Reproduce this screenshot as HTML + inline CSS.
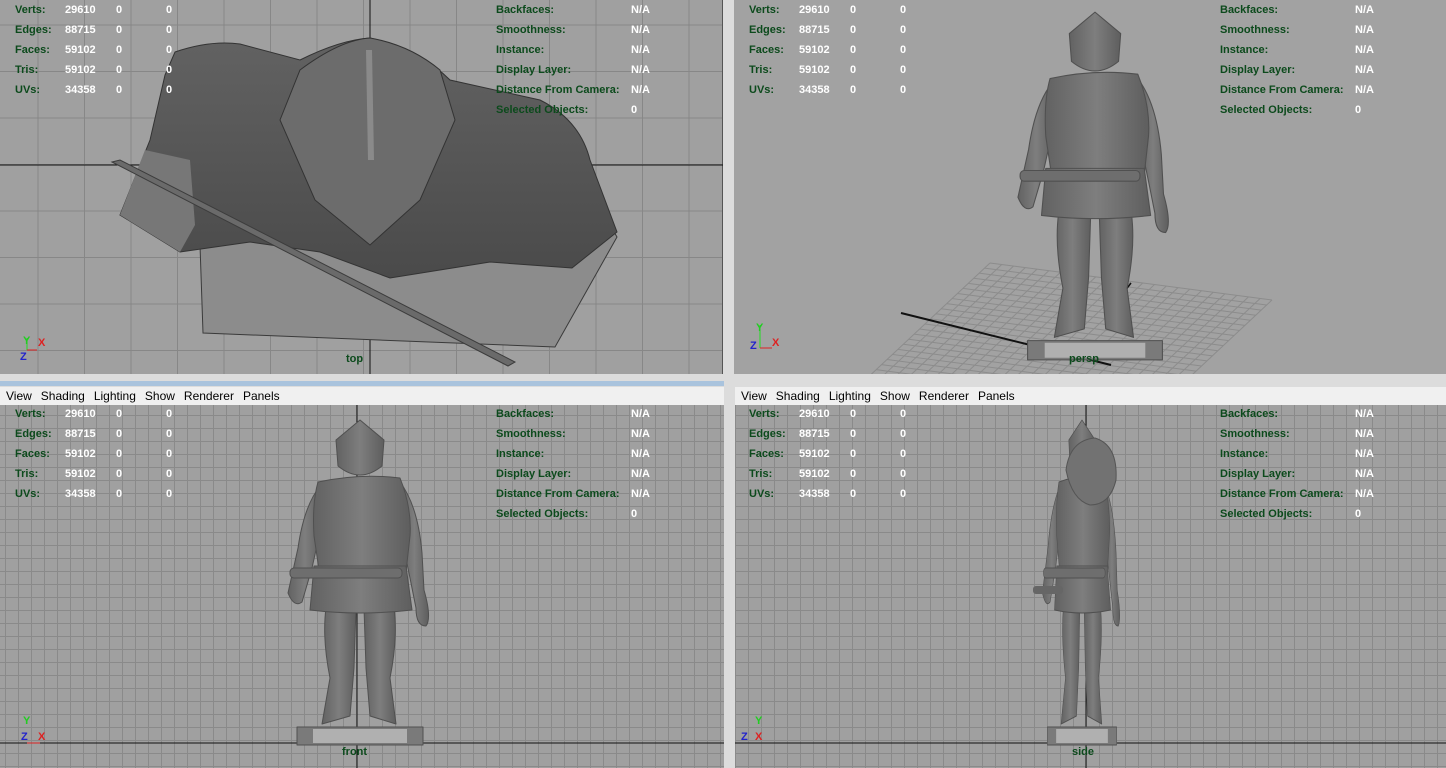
<!DOCTYPE html>
<html><head><meta charset="utf-8">
<style>
*{margin:0;padding:0;box-sizing:border-box}
body{width:1446px;height:768px;overflow:hidden;background:#dcdcdc;position:relative;font-family:"Liberation Sans",Arial,sans-serif}
.vp{position:absolute;background:#a0a0a0;overflow:hidden}
.g46{background-color:#a0a0a0;background-image:linear-gradient(90deg,#878787 1px,transparent 1px),linear-gradient(#878787 1px,transparent 1px);background-size:46.5px 46.5px;background-position:-9px -22px}
.g13{background-color:#a0a0a0;background-image:linear-gradient(90deg,#8a8a8a 1px,transparent 1px),linear-gradient(#8a8a8a 1px,transparent 1px);background-size:13px 13px}
.hud{position:absolute;font-size:11px;font-weight:bold;line-height:20px;white-space:nowrap}
.l{color:#0c4a1c;position:absolute}
.v{color:#fff;position:absolute}
.cam{position:absolute;color:#0c4a1c;font-size:11px;font-weight:bold}
.menu{position:absolute;top:387px;height:18px;background:#f0f0f0;font-size:12px;color:#000;line-height:19px;padding-left:6px;word-spacing:0}
.menu span{margin-right:9px}
svg{position:absolute;left:0;top:0}
</style></head><body>

<div class="vp g46" style="left:0;top:0;width:723px;height:374px;border-right:1px solid #555"></div>
<div class="vp" style="left:734px;top:0;width:712px;height:374px;background:#a2a2a2"></div>
<div style="position:absolute;left:0;top:381px;width:724px;height:5px;background:#a9c3dd"></div>
<div class="menu" style="left:0;width:724px"><span>View</span><span>Shading</span><span>Lighting</span><span>Show</span><span>Renderer</span><span>Panels</span></div>
<div class="menu" style="left:735px;width:711px"><span>View</span><span>Shading</span><span>Lighting</span><span>Show</span><span>Renderer</span><span>Panels</span></div>
<div class="vp g13" style="left:0;top:405px;width:724px;height:363px;background-position:5px 10px"></div>
<div class="vp g13" style="left:735px;top:405px;width:711px;height:363px;background-position:0px 10px"></div>

<svg width="1446" height="768" viewBox="0 0 1446 768">
<defs>
<linearGradient id="bd" x1="0" x2="1"><stop offset="0" stop-color="#626262"/><stop offset=".5" stop-color="#7e7e7e"/><stop offset="1" stop-color="#5e5e5e"/></linearGradient>
<linearGradient id="dk" x1="0" y1="0" x2="0" y2="1"><stop offset="0" stop-color="#626262"/><stop offset="1" stop-color="#4a4a4a"/></linearGradient>
<clipPath id="ctl"><rect x="0" y="0" width="723" height="374"/></clipPath>
<clipPath id="ctr"><rect x="734" y="0" width="712" height="374"/></clipPath>
<g id="knight" fill="url(#bd)" stroke="#505050" stroke-width="1" stroke-linejoin="round">
<path d="M-40 68 Q-56 88 -62 130 L-72 175 Q-66 190 -58 184 L-48 150 L-38 105Z"/>
<path d="M40 64 Q58 88 62 135 L64 172 Q72 200 66 208 Q56 208 56 190 L50 160 L40 112Z"/>
<path d="M-34 190 L-4 190 L-6 250 L-10 298 L-38 306 L-30 260 Q-38 220 -34 190Z"/>
<path d="M34 190 L4 190 L6 250 L10 298 L36 306 L30 260 Q38 220 34 190Z"/>
<path d="M-42 64 Q0 55 40 60 Q52 90 50 118 L44 172 L-38 172 L-46 118 Q-48 85 -42 64Z"/>
<path d="M-46 148 L46 148 L52 192 Q0 198 -50 192Z"/>
<rect x="-70" y="150" width="112" height="10" rx="4" fill="#6e6e6e"/>
<path d="M-24 22 L0 2 L24 22 L22 48 Q0 66 -22 48Z"/>
<rect x="-63" y="309" width="126" height="18" fill="#7a7a7a"/>
<rect x="-47" y="311" width="94" height="14" fill="#b0b0b0" stroke="none"/>
</g>
</defs>

<g clip-path="url(#ctl)">
<line x1="370" y1="0" x2="370" y2="374" stroke="#111"/>
<line x1="0" y1="165" x2="723" y2="165" stroke="#111"/>
<path d="M200 245 L203 333 L555 347 L617 237 L590 190 L300 210Z" fill="#8c8c8c" stroke="#3a3a3a"/>
<path d="M175 52 Q210 40 240 44 L300 60 Q340 40 370 38 Q420 50 450 80 L540 100 Q580 120 590 160 L617 232 L572 268 L490 262 L390 278 L320 252 L250 242 L180 252 L120 215 L150 140 L165 75Z" fill="url(#dk)" stroke="#333"/>
<path d="M120 215 L145 150 L190 160 L195 225 L180 252Z" fill="#777"/>
<path d="M280 120 L300 70 Q340 40 370 38 Q410 45 440 70 L455 120 L420 200 L370 245 L315 200Z" fill="#6c6c6c" stroke="#333"/>
<path d="M366 50 L372 50 L374 160 L368 160Z" fill="#8a8a8a"/>
<path d="M112 162 L120 160 L515 362 L508 366Z" fill="#6a6a6a" stroke="#3c3c3c"/>
</g>

<g clip-path="url(#ctr)">
<g stroke="#8c8c8c" stroke-width="1" fill="none" transform="matrix(11.75,1.54,-5.42,5.08,990,263)">
<path vector-effect="non-scaling-stroke" d="M0 0H24M0 1H24M0 2H24M0 3H24M0 4H24M0 5H24M0 6H24M0 7H24M0 8H24M0 9H24M0 10H24M0 11H24M0 12H24M0 13H24M0 14H24M0 15H24M0 16H24M0 17H24M0 18H24M0 19H24M0 20H24M0 21H24M0 22H24M0 23H24M0 24H24M0 0V24M1 0V24M2 0V24M3 0V24M4 0V24M5 0V24M6 0V24M7 0V24M8 0V24M9 0V24M10 0V24M11 0V24M12 0V24M13 0V24M14 0V24M15 0V24M16 0V24M17 0V24M18 0V24M19 0V24M20 0V24M21 0V24M22 0V24M23 0V24M24 0V24"/>
</g>
<line x1="901" y1="313" x2="1111" y2="365" stroke="#111" stroke-width="2"/>
<line x1="1131" y1="283" x2="1118" y2="300" stroke="#111" stroke-width="1.5"/>
<use href="#knight" transform="translate(1095,10) scale(1.07)"/>
</g>

<line x1="357" y1="405" x2="357" y2="768" stroke="#111"/>
<line x1="0" y1="743" x2="724" y2="743" stroke="#111"/>
<use href="#knight" transform="translate(360,418)"/>

<line x1="1086" y1="405" x2="1086" y2="768" stroke="#111"/>
<line x1="735" y1="743" x2="1446" y2="743" stroke="#111"/>
<use href="#knight" transform="translate(1082,418) scale(0.55,1)"/>
<path d="M1066 470 Q1070 440 1095 438 Q1118 445 1116 480 Q1110 505 1090 505 Q1072 500 1066 470Z" fill="#727272" stroke="#555"/>
<rect x="1033" y="586" width="30" height="8" rx="3" fill="#666"/>

<g font-family="Liberation Sans" font-weight="bold" font-size="11">
<g transform="translate(22,336)"><line x1="5" y1="2" x2="5" y2="14" stroke="#2d2"/><line x1="5" y1="14" x2="15" y2="14" stroke="#d22"/><text x="1" y="8" fill="#2c2">Y</text><text x="-2" y="24" fill="#22c">Z</text><text x="16" y="10" fill="#d22">X</text></g>
<g transform="translate(752,321)"><line x1="8" y1="4" x2="8" y2="27" stroke="#2d2"/><line x1="8" y1="27" x2="20" y2="27" stroke="#d22"/><text x="4" y="10" fill="#2c2">Y</text><text x="-2" y="28" fill="#22c">Z</text><text x="20" y="25" fill="#d22">X</text></g>
<g transform="translate(22,713)"><text x="1" y="11" fill="#2c2">Y</text><text x="-1" y="27" fill="#22c">Z</text><text x="16" y="27" fill="#d22">X</text><line x1="5" y1="30" x2="18" y2="30" stroke="#d22"/></g>
<g transform="translate(741,713)"><text x="14" y="11" fill="#2c2">Y</text><text x="0" y="27" fill="#22c">Z</text><text x="14" y="27" fill="#d22">X</text></g>
</g>
</svg>

<div class="cam" style="left:346px;top:353px">top</div>
<div class="cam" style="left:1069px;top:353px">persp</div>
<div class="cam" style="left:342px;top:746px">front</div>
<div class="cam" style="left:1072px;top:746px">side</div>

<div class="hud" style="left:15px;top:0px">
<div class="l" style="top:0">Verts:</div><div class="l" style="top:20px">Edges:</div><div class="l" style="top:40px">Faces:</div><div class="l" style="top:60px">Tris:</div><div class="l" style="top:80px">UVs:</div>
<div class="v" style="left:50px;top:0">29610</div><div class="v" style="left:50px;top:20px">88715</div><div class="v" style="left:50px;top:40px">59102</div><div class="v" style="left:50px;top:60px">59102</div><div class="v" style="left:50px;top:80px">34358</div>
<div class="v" style="left:101px;top:0">0<br>0<br>0<br>0<br>0</div><div class="v" style="left:151px;top:0">0<br>0<br>0<br>0<br>0</div>
<div class="l" style="left:481px;top:0">Backfaces:<br>Smoothness:<br>Instance:<br>Display Layer:<br>Distance From Camera:<br>Selected Objects:</div>
<div class="v" style="left:616px;top:0">N/A<br>N/A<br>N/A<br>N/A<br>N/A<br>0</div>
</div>
<div class="hud" style="left:749px;top:0px">
<div class="l" style="top:0">Verts:</div><div class="l" style="top:20px">Edges:</div><div class="l" style="top:40px">Faces:</div><div class="l" style="top:60px">Tris:</div><div class="l" style="top:80px">UVs:</div>
<div class="v" style="left:50px;top:0">29610</div><div class="v" style="left:50px;top:20px">88715</div><div class="v" style="left:50px;top:40px">59102</div><div class="v" style="left:50px;top:60px">59102</div><div class="v" style="left:50px;top:80px">34358</div>
<div class="v" style="left:101px;top:0">0<br>0<br>0<br>0<br>0</div><div class="v" style="left:151px;top:0">0<br>0<br>0<br>0<br>0</div>
<div class="l" style="left:471px;top:0">Backfaces:<br>Smoothness:<br>Instance:<br>Display Layer:<br>Distance From Camera:<br>Selected Objects:</div>
<div class="v" style="left:606px;top:0">N/A<br>N/A<br>N/A<br>N/A<br>N/A<br>0</div>
</div>
<div class="hud" style="left:15px;top:404px">
<div class="l" style="top:0">Verts:</div><div class="l" style="top:20px">Edges:</div><div class="l" style="top:40px">Faces:</div><div class="l" style="top:60px">Tris:</div><div class="l" style="top:80px">UVs:</div>
<div class="v" style="left:50px;top:0">29610</div><div class="v" style="left:50px;top:20px">88715</div><div class="v" style="left:50px;top:40px">59102</div><div class="v" style="left:50px;top:60px">59102</div><div class="v" style="left:50px;top:80px">34358</div>
<div class="v" style="left:101px;top:0">0<br>0<br>0<br>0<br>0</div><div class="v" style="left:151px;top:0">0<br>0<br>0<br>0<br>0</div>
<div class="l" style="left:481px;top:0">Backfaces:<br>Smoothness:<br>Instance:<br>Display Layer:<br>Distance From Camera:<br>Selected Objects:</div>
<div class="v" style="left:616px;top:0">N/A<br>N/A<br>N/A<br>N/A<br>N/A<br>0</div>
</div>
<div class="hud" style="left:749px;top:404px">
<div class="l" style="top:0">Verts:</div><div class="l" style="top:20px">Edges:</div><div class="l" style="top:40px">Faces:</div><div class="l" style="top:60px">Tris:</div><div class="l" style="top:80px">UVs:</div>
<div class="v" style="left:50px;top:0">29610</div><div class="v" style="left:50px;top:20px">88715</div><div class="v" style="left:50px;top:40px">59102</div><div class="v" style="left:50px;top:60px">59102</div><div class="v" style="left:50px;top:80px">34358</div>
<div class="v" style="left:101px;top:0">0<br>0<br>0<br>0<br>0</div><div class="v" style="left:151px;top:0">0<br>0<br>0<br>0<br>0</div>
<div class="l" style="left:471px;top:0">Backfaces:<br>Smoothness:<br>Instance:<br>Display Layer:<br>Distance From Camera:<br>Selected Objects:</div>
<div class="v" style="left:606px;top:0">N/A<br>N/A<br>N/A<br>N/A<br>N/A<br>0</div>
</div>
</body></html>
